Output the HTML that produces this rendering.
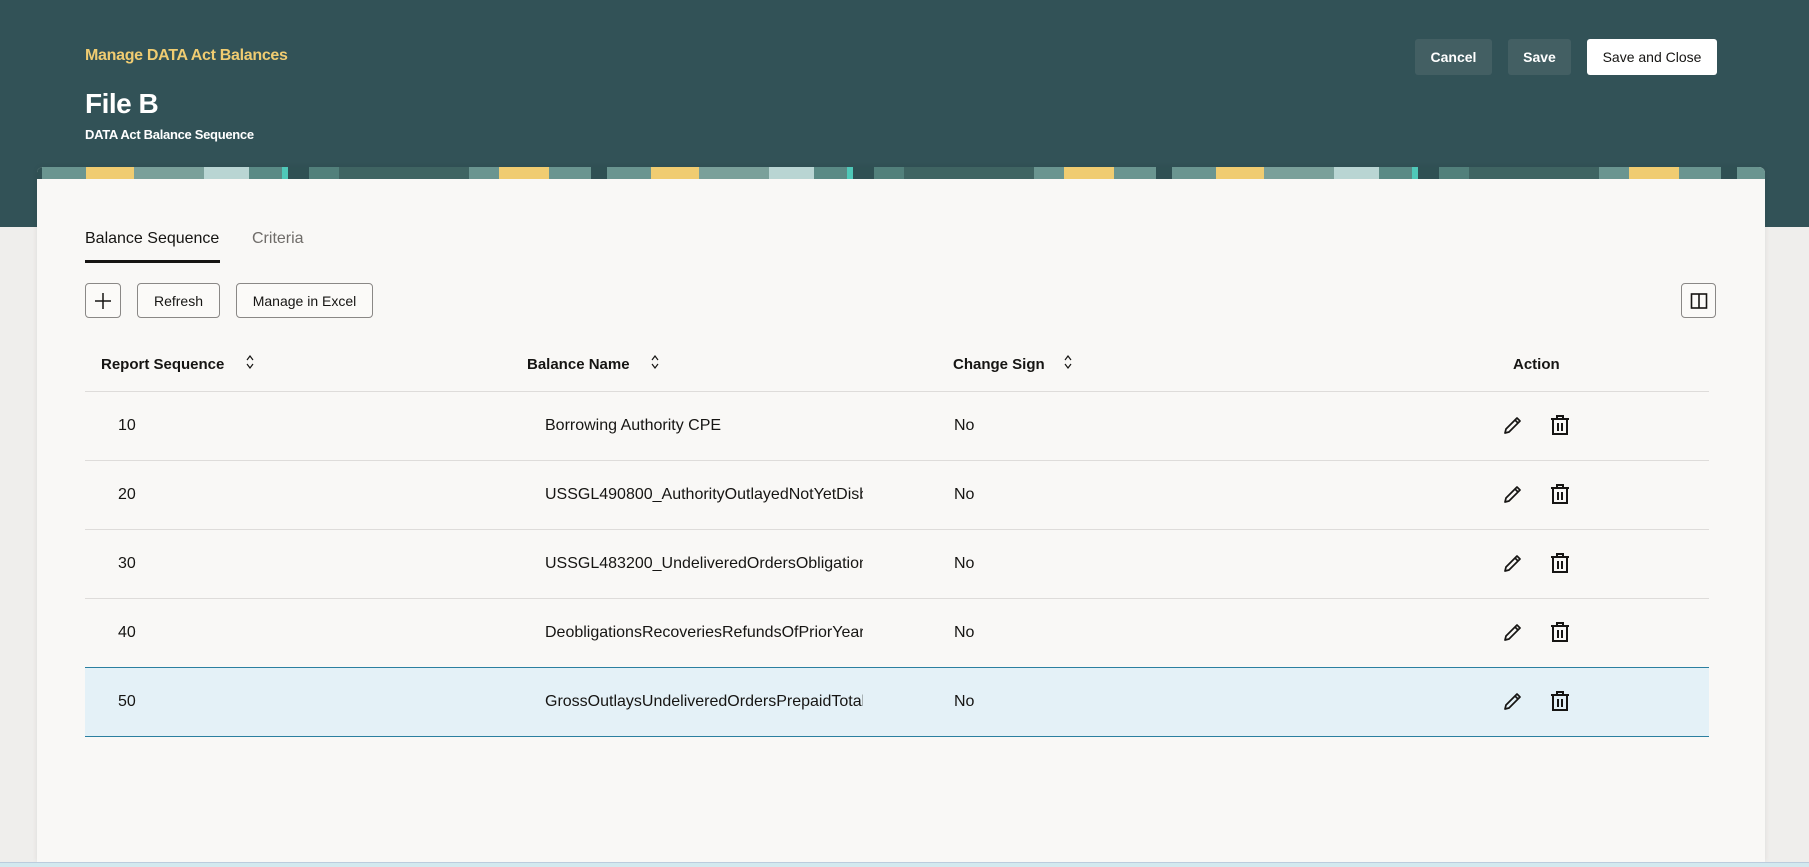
<!DOCTYPE html>
<html><head><meta charset="utf-8"><style>
*{box-sizing:border-box;margin:0;padding:0}
body{width:1809px;height:867px;overflow:hidden;background:#efeeec;font-family:"Liberation Sans",sans-serif;position:relative;color:#161513}
.hdr{position:absolute;left:0;top:0;width:1809px;height:227px;background:#325257}
.t1{position:absolute;left:85px;top:47px;color:#f0cc71;font-size:16px;font-weight:bold;letter-spacing:-0.3px}
.t2{position:absolute;left:85px;top:88px;color:#fff;font-size:28px;font-weight:bold;letter-spacing:-0.5px}
.t3{position:absolute;left:85px;top:127px;color:#fff;font-size:13px;font-weight:bold;letter-spacing:-0.3px}
.hb{position:absolute;top:39px;height:36px;border-radius:3px;font-size:14px;font-weight:bold;display:flex;align-items:center;justify-content:center}
.panel{position:absolute;left:37px;top:167px;width:1728px;height:695px;background:#f9f8f6;border-radius:6px 6px 0 0;overflow:hidden;box-shadow:0 0 6px rgba(0,0,0,.08)}
.strip{position:absolute;left:0;top:0;width:100%;height:12px;
background:linear-gradient(90deg,#3f6462 0,#3f6462 130px,#6a9590 130px,#6a9590 160px,#f0cc71 160px,#f0cc71 210px,#6a9590 210px,#6a9590 252px,#2f5053 252px,#2f5053 268px,#6a9590 268px,#6a9590 312px,#f0cc71 312px,#f0cc71 360px,#7aa09a 360px,#7aa09a 430px,#b9d5d3 430px,#b9d5d3 475px,#5a8a85 475px,#5a8a85 508px,#4fc8b8 508px,#4fc8b8 514px,#2f5053 514px,#2f5053 535px,#52807b 535px,#52807b 565px,#3f6462 565px);background-size:565px 12px;background-position:-263px 0}
.tab{position:absolute;top:63px;font-size:16px}
.btn{position:absolute;top:116px;height:35px;border:1px solid #8a8886;border-radius:4px;font-size:14px;display:flex;align-items:center;justify-content:center;background:#fbfaf8}
.th{position:absolute;top:189px;font-size:15px;font-weight:bold}
.sort{position:absolute;top:186px;width:10px;height:18px}
.line{position:absolute;left:48px;width:1624px;height:1px;background:#dedcda}
.cell{position:absolute;font-size:16px;white-space:nowrap;overflow:hidden}
.sel{position:absolute;left:48px;width:1624px;top:500px;height:70px;background:#e4f1f7;border-top:1px solid #2b7fa0;border-bottom:1px solid #2b7fa0}
.bottom{position:absolute;left:0;top:862px;width:1809px;height:5px;background:#d3e9ef;border-top:1px solid #bcd}
</style></head><body>
<div class="hdr"></div>
<div class="t1">Manage DATA Act Balances</div>
<div class="t2">File B</div>
<div class="t3">DATA Act Balance Sequence</div>
<div class="hb" style="left:1415px;width:77px;background:#435f63;color:#fff">Cancel</div>
<div class="hb" style="left:1508px;width:63px;background:#435f63;color:#fff">Save</div>
<div class="hb" style="left:1587px;width:130px;background:#fff;color:#161513;font-weight:normal">Save and Close</div>
<div class="panel">
<div class="strip"></div>
<div class="tab" style="left:48px">Balance Sequence</div>
<div style="position:absolute;left:48px;top:93px;width:135px;height:3px;background:#161513"></div>
<div class="tab" style="left:215px;color:#6f6c69">Criteria</div>
<div class="btn" style="left:48px;width:36px"><svg width="20" height="20" viewBox="0 0 20 20"><path d="M10 2v16M2 10h16" stroke="#161513" stroke-width="1.5"/></svg></div>
<div class="btn" style="left:100px;width:83px">Refresh</div>
<div class="btn" style="left:199px;width:137px">Manage in Excel</div>
<div class="btn" style="left:1644px;width:35px"><svg width="18" height="18" viewBox="0 0 18 18"><rect x="1.5" y="2" width="15" height="14" fill="none" stroke="#161513" stroke-width="1.6"/><path d="M9 2v14" stroke="#161513" stroke-width="1.6"/></svg></div>
<div class="th" style="left:64px">Report Sequence</div>
<div class="th" style="left:490px">Balance Name</div>
<div class="th" style="left:916px">Change Sign</div>
<div class="th" style="left:1476px">Action</div>
<svg class="sort" style="left:208px" viewBox="0 0 10 18"><path d="M2 7l3-4 3 4M2 11l3 4 3-4" fill="none" stroke="#161513" stroke-width="1.2"/></svg>
<svg class="sort" style="left:613px" viewBox="0 0 10 18"><path d="M2 7l3-4 3 4M2 11l3 4 3-4" fill="none" stroke="#161513" stroke-width="1.2"/></svg>
<svg class="sort" style="left:1026px" viewBox="0 0 10 18"><path d="M2 7l3-4 3 4M2 11l3 4 3-4" fill="none" stroke="#161513" stroke-width="1.2"/></svg>
<div class="line" style="top:224px"></div>
<div class="line" style="top:293px"></div>
<div class="line" style="top:362px"></div>
<div class="line" style="top:431px"></div>
<div class="sel"></div>
<div class="cell" style="left:81px;top:250px">10</div><div class="cell" style="left:508px;top:250px;width:318px">Borrowing Authority CPE</div><div class="cell" style="left:917px;top:250px">No</div>
<div class="cell" style="left:81px;top:319px">20</div><div class="cell" style="left:508px;top:319px;width:318px">USSGL490800_AuthorityOutlayedNotYetDisbursed</div><div class="cell" style="left:917px;top:319px">No</div>
<div class="cell" style="left:81px;top:388px">30</div><div class="cell" style="left:508px;top:388px;width:318px">USSGL483200_UndeliveredOrdersObligations</div><div class="cell" style="left:917px;top:388px">No</div>
<div class="cell" style="left:81px;top:457px">40</div><div class="cell" style="left:508px;top:457px;width:318px">DeobligationsRecoveriesRefundsOfPriorYear</div><div class="cell" style="left:917px;top:457px">No</div>
<div class="cell" style="left:81px;top:526px">50</div><div class="cell" style="left:508px;top:526px;width:318px">GrossOutlaysUndeliveredOrdersPrepaidTotal</div><div class="cell" style="left:917px;top:526px">No</div>
<svg width="0" height="0" style="position:absolute"><defs>
<g id="pen"><path d="M3 19l1-4L15 4l3 3L7 18z M13 6l3 3" fill="none" stroke="#161513" stroke-width="1.7" stroke-linejoin="round"/></g>
<g id="tr"><path d="M2 5h18M8 5V2h6v3M4 5v15h14V5M9 9v8M13 9v8" fill="none" stroke="#161513" stroke-width="2"/></g>
</defs></svg>
<svg style="position:absolute;left:1465px;top:247px" width="22" height="22" viewBox="0 0 22 22"><use href="#pen"/></svg>
<svg style="position:absolute;left:1512px;top:247px" width="22" height="22" viewBox="0 0 22 22"><use href="#tr"/></svg>
<svg style="position:absolute;left:1465px;top:316px" width="22" height="22" viewBox="0 0 22 22"><use href="#pen"/></svg>
<svg style="position:absolute;left:1512px;top:316px" width="22" height="22" viewBox="0 0 22 22"><use href="#tr"/></svg>
<svg style="position:absolute;left:1465px;top:385px" width="22" height="22" viewBox="0 0 22 22"><use href="#pen"/></svg>
<svg style="position:absolute;left:1512px;top:385px" width="22" height="22" viewBox="0 0 22 22"><use href="#tr"/></svg>
<svg style="position:absolute;left:1465px;top:454px" width="22" height="22" viewBox="0 0 22 22"><use href="#pen"/></svg>
<svg style="position:absolute;left:1512px;top:454px" width="22" height="22" viewBox="0 0 22 22"><use href="#tr"/></svg>
<svg style="position:absolute;left:1465px;top:523px" width="22" height="22" viewBox="0 0 22 22"><use href="#pen"/></svg>
<svg style="position:absolute;left:1512px;top:523px" width="22" height="22" viewBox="0 0 22 22"><use href="#tr"/></svg>
</div>
<div class="bottom"></div>
</body></html>
